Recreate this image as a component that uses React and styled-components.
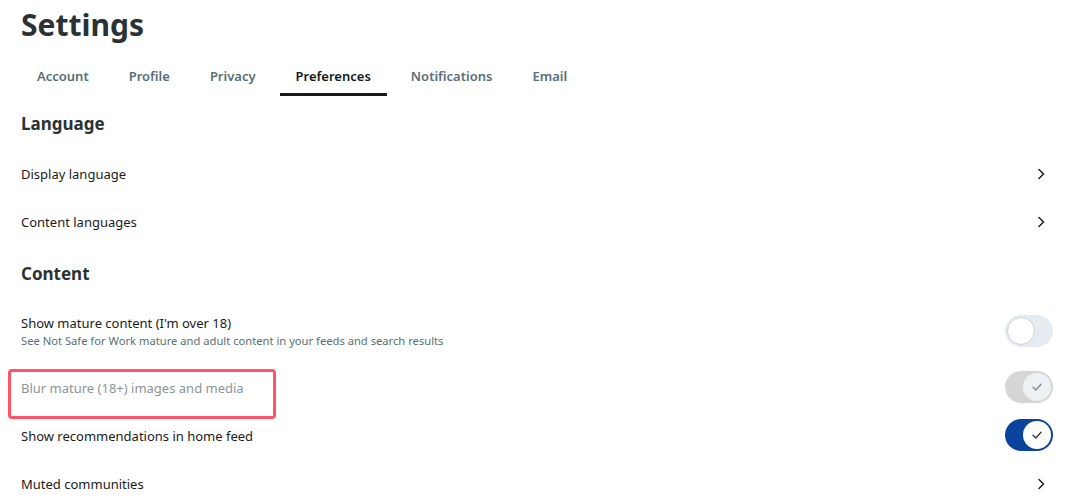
import React from "react";
import styled, { createGlobalStyle } from "styled-components";

const Global = createGlobalStyle`
  html, body { margin: 0; padding: 0; background: #fff; }
  body { font-family: "Segoe UI", "Noto Sans", "Open Sans", sans-serif; color: #1a1a1b; }
  * { box-sizing: border-box; }
`;

const Page = styled.div`
  padding: 0 21px;
  width: 1074px;
`;

const Title = styled.h1`
  margin: 0;
  height: 48px;
  display: flex;
  align-items: center;
  font-size: 30px;
  font-weight: 700;
  color: #2a3236;
`;

const Tabs = styled.nav`
  display: flex;
  gap: 8px;
  margin-top: 8px;
`;

const Tab = styled.div`
  height: 40px;
  padding: 3px 16px 0;
  display: flex;
  align-items: center;
  font-size: 13px;
  font-weight: 600;
  color: ${(p) => (p.$active ? "#0f1a1c" : "#576f76")};
  border-bottom: 3px solid ${(p) => (p.$active ? "#1a1a1b" : "transparent")};
`;

const SectionTitle = styled.h2`
  margin: 0;
  height: 53px;
  display: flex;
  align-items: center;
  font-size: 17px;
  font-weight: 700;
  color: #2a3236;
  padding-top: ${(p) => (p.$first ? "2px" : "4px")};
`;

const Row = styled.div`
  position: relative;
  display: flex;
  align-items: center;
  justify-content: space-between;
  min-height: ${(p) => (p.$tall ? "65px" : "48px")};
  padding-top: 1px;
`;

const Labels = styled.div`
  display: flex;
  flex-direction: column;
  gap: 1px;
`;

const Label = styled.span`
  font-size: 13px;
  color: ${(p) => (p.$disabled ? "#8a9599" : "#1a1a1b")};
`;

const Sub = styled.span`
  font-size: 11.2px;
  color: #576f76;
`;

const Highlight = styled.div`
  position: absolute;
  left: -13px;
  top: 6px;
  width: 268px;
  height: 50px;
  border: 3px solid #ff5468;
  border-radius: 4px;
  pointer-events: none;
`;

const ChevronBox = styled.div`
  width: 24px;
  height: 24px;
  display: flex;
  align-items: center;
  justify-content: center;
`;

const Track = styled.div`
  width: 48px;
  height: 32px;
  border-radius: 16px;
  padding: 2px;
  display: flex;
  flex-shrink: 0;
  margin-top: -1px;
  justify-content: ${(p) => (p.$on ? "flex-end" : "flex-start")};
  background: ${(p) => (p.$variant === "on" ? "#0b449d" : p.$variant === "disabled" ? "#d6d6d6" : "#e5ebee")};
`;

const Knob = styled.div`
  width: 28px;
  height: 28px;
  border-radius: 50%;
  background: ${(p) => (p.$variant === "disabled" ? "#eef1f3" : "#fff")};
  border: 1px solid ${(p) => (p.$variant === "off" ? "#ccd3d6" : "transparent")};
  display: flex;
  align-items: center;
  justify-content: center;
`;

const Chevron = () => (
  <ChevronBox>
    <svg width="16" height="16" viewBox="0 0 16 16" fill="none">
      <path d="M6 3.5 L10.5 8 L6 12.5" stroke="#1a1a1b" strokeWidth="1.5" strokeLinecap="round" strokeLinejoin="round" />
    </svg>
  </ChevronBox>
);

const Check = ({ color }) => (
  <svg width="12" height="12" viewBox="0 0 12 12" fill="none">
    <path d="M2 6.3 L4.8 9 L10 3.3" stroke={color} strokeWidth="1.3" strokeLinecap="round" strokeLinejoin="round" />
  </svg>
);

const Toggle = ({ variant }) => {
  const on = variant !== "off";
  return (
    <Track $on={on} $variant={variant}>
      <Knob $variant={variant}>{on && <Check color={variant === "disabled" ? "#7c8a8f" : "#333"} />}</Knob>
    </Track>
  );
};

const tabs = ["Account", "Profile", "Privacy", "Preferences", "Notifications", "Email"];

export default function App() {
  return (
    <Page>
      <Global />
      <Title>Settings</Title>
      <Tabs>
        {tabs.map((t) => (
          <Tab key={t} $active={t === "Preferences"}>{t}</Tab>
        ))}
      </Tabs>
      <SectionTitle $first>Language</SectionTitle>
      <Row>
        <Label>Display language</Label>
        <Chevron />
      </Row>
      <Row>
        <Label>Content languages</Label>
        <Chevron />
      </Row>
      <SectionTitle>Content</SectionTitle>
      <Row $tall>
        <Labels>
          <Label>Show mature content (I'm over 18)</Label>
          <Sub>See Not Safe for Work mature and adult content in your feeds and search results</Sub>
        </Labels>
        <Toggle variant="off" />
      </Row>
      <Row>
        <Label $disabled>Blur mature (18+) images and media</Label>
        <Toggle variant="disabled" />
        <Highlight />
      </Row>
      <Row>
        <Label>Show recommendations in home feed</Label>
        <Toggle variant="on" />
      </Row>
      <Row>
        <Label>Muted communities</Label>
        <Chevron />
      </Row>
    </Page>
  );
}
